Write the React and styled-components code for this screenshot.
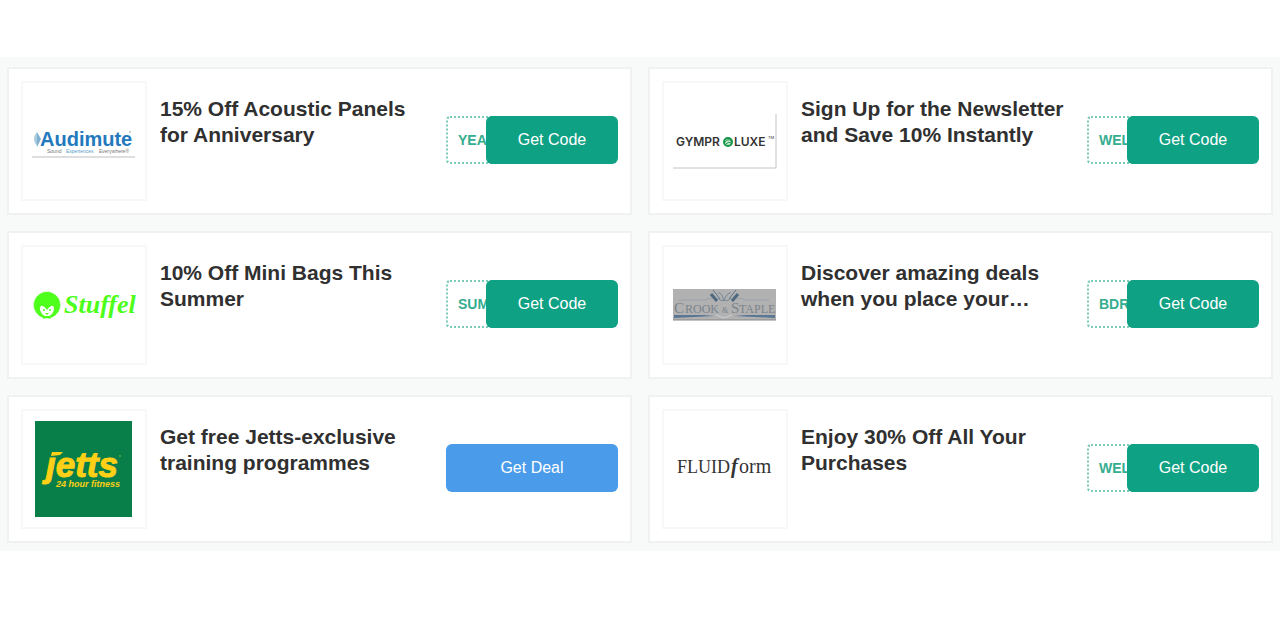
import React from 'react'

import styled, { createGlobalStyle } from 'styled-components'


const coupons = [
    {
        id: 'audimute',
        title: '15% Off Acoustic Panels for Anniversary',
        code: 'YEAR',
        logo: AudimuteLogo,
    },
    {
        id: 'gymproluxe',
        title: 'Sign Up for the Newsletter and Save 10% Instantly',
        code: 'WELC',
        logo: GymproluxeLogo,
    },
    {
        id: 'stuffel',
        title: '10% Off Mini Bags This Summer',
        code: 'SUMM',
        logo: StuffelLogo,
    },
    {
        id: 'crook',
        title: 'Discover amazing deals when you place your…',
        code: 'BDRC',
        logo: CrookLogo,
    },
    {
        id: 'jetts',
        title: 'Get free Jetts-exclusive training programmes',
        logo: JettsLogo,
    },
    {
        id: 'fluidform',
        title: 'Enjoy 30% Off All Your Purchases',
        code: 'WELC',
        logo: FluidformLogo,
    },
]

function App() {
    return (
        <>
            <GlobalStyle />
            <CouponGrid>
                {coupons.map((coupon) => (
                    <Coupon key={coupon.id} {...coupon} />
                ))}
            </CouponGrid>
        </>
    )
}

function Coupon({ title, code, logo: Logo }) {
    return (
        <Card>
            <LogoBox>
                <Logo />
            </LogoBox>
            <Title>{title}</Title>
            {code ? (
                <CodeButton type="button">
                    <Code>{code}</Code>
                    <CodeLabel>Get Code</CodeLabel>
                </CodeButton>
            ) : (
                <DealButton type="button">Get Deal</DealButton>
            )}
        </Card>
    )
}

function AudimuteLogo() {
    return (
        <LogoSvg viewBox="0 0 104 98" role="img" aria-label="Audimute">
            <path d="M5 40 Q-1 47 5 54 Z" fill="#a9cbe0" />
            <path d="M5 40 L9 47 L5 55 Z" fill="#7fb0d0" />
            <SansText x="8" y="54" fontSize="20" fontWeight="700" fill="#2379bd">Audimute</SansText>
            <circle cx="98" cy="40" r="1" fill="#b5c4ce" />
            <SansText x="15" y="61" fontSize="5" fill="#777">Sound</SansText>
            <SansText x="34" y="61" fontSize="5" fill="#5a9cc5">Experiences</SansText>
            <SansText x="67" y="61" fontSize="5" fill="#777">Everywhere®</SansText>
            <path d="M0 65 H103" stroke="#bdbdbd" />
        </LogoSvg>
    )
}

function GymproluxeLogo() {
    return (
        <LogoSvg viewBox="0 0 104 98" role="img" aria-label="Gymproluxe">
            <InterText x="3" y="54" fontSize="12" fontWeight="600" fill="#333">GYMPR</InterText>
            <circle cx="55" cy="50" r="4" fill="#c5e8d0" stroke="#159447" strokeWidth="2" />
            <path d="M52 50 Q55 46 58 49 M53 52 Q56 49 58 51" stroke="#159447" fill="none" />
            <InterText x="61" y="54" fontSize="12" fontWeight="600" fill="#333">LUXE</InterText>
            <InterText x="95" y="47" fontSize="4" fill="#333">TM</InterText>
            <path d="M103 22 V76 H0" stroke="#c4c4c4" strokeWidth="1" fill="none" />
        </LogoSvg>
    )
}

function StuffelLogo() {
    return (
        <LogoSvg viewBox="0 0 104 98" role="img" aria-label="Stuffel">
            <circle cx="15" cy="49" r="13" fill="#4dff1a" />
            <circle cx="15" cy="49" r="13" fill="none" stroke="#4dff1a" strokeDasharray="1 1" strokeWidth="1" />
            <path d="M8 53 Q8 49 11 50 Q13 51 15 54 Q17 51 19 50 Q22 49 22 53 Q22 58 15 61 Q8 58 8 53 Z" fill="#fff" />
            <circle cx="12" cy="54" r="1" fill="#4dff1a" />
            <circle cx="18" cy="54" r="1" fill="#4dff1a" />
            <path d="M13 57 H17 L15 59 Z M10 60 H20 L18 63 L15 61 L12 63 Z" fill="#4dff1a" />
            <ScriptText x="32" y="57" fontSize="26" fill="#4dff1a">Stuffel</ScriptText>
        </LogoSvg>
    )
}

function CrookLogo() {
    return (
        <LogoSvg viewBox="0 0 104 98" role="img" aria-label="Crook and Staple">
            <rect x="0" y="33" width="103" height="31" fill="#b1b1b1" />
            <path d="M40 34 L47 43 M63 34 L56 43" stroke="#60758a" strokeWidth="1" />
            <path d="M38 38 L44 45 M65 38 L59 45" stroke="#4e6880" strokeWidth="3" />
            <path d="M45 37 Q49 36 51 45 Q54 36 58 37 M45 42 Q50 47 51 43 Q53 47 58 42" stroke="#788896" fill="none" />
            <path d="M6 44 H32 Q37 41 40 43 M96 44 H72 Q67 41 63 43" stroke="#9aa1a8" fill="none" />
            <SerifText y="57" fill="#7a838c">
                <tspan x="1" fontSize="15">C</tspan>
                <tspan x="12" fontSize="12">ROOK</tspan>
                <tspan x="49" fontSize="8">&amp;</tspan>
                <tspan x="58" fontSize="15">S</tspan>
                <tspan x="66" fontSize="12">TAPLE</tspan>
            </SerifText>
            <path d="M1 59 L30 59 L42 60 L1 62 Z M102 59 L73 59 L61 60 L102 62 Z" fill="#5a7793" />
            <path d="M43 59 L51 62 L59 59" stroke="#cdd0d3" fill="none" />
            <path d="M0 64 H103" stroke="#858585" />
        </LogoSvg>
    )
}

function JettsLogo() {
    return (
        <LogoSvg viewBox="0 0 104 98" role="img" aria-label="Jetts 24 hour fitness">
            <rect x="3" y="1" width="97" height="96" fill="#087f49" />
            <SansText x="14" y="57" fontSize="35" fontWeight="700" fontStyle="italic" fill="#ffd016" stroke="#ffd016">ȷetts</SansText>
            <path d="M20 32 L31 32 L28 35 L19 36 Z" fill="#ffd016" />
            <circle cx="88" cy="36" r="1" fill="#5aa03a" />
            <SansText x="24" y="67" fontSize="9" fontWeight="700" fontStyle="italic" fill="#ffd016">24 hour fitness</SansText>
        </LogoSvg>
    )
}

function FluidformLogo() {
    return (
        <LogoSvg viewBox="0 0 104 98" role="img" aria-label="Fluidform">
            <SerifText y="53" fontSize="18" fill="#333">
                <tspan x="4">FLUID</tspan>
                <tspan x="58" fontSize="20" fontWeight="700" fontStyle="italic">f</tspan>
                <tspan x="66" fontSize="20">orm</tspan>
            </SerifText>
        </LogoSvg>
    )
}

const GlobalStyle = createGlobalStyle`
    * {
        box-sizing: border-box;
    }
    body {
        margin: 0;
        background-color: #ffffff;
        font-family: "Liberation Sans", Arial, sans-serif;
    }
`

const CouponGrid = styled.main`
    display: grid;
    grid-template-columns: repeat(2, minmax(0, 1fr));
    gap: 16px;
    margin-top: 57px;
    padding: 10px 7px 8px;
    background-color: #f8faf9;
`

const Card = styled.article`
    display: flex;
    align-items: center;
    gap: 13px;
    padding: 12px;
    border: 2px solid #f0f2f2;
    background-color: #ffffff;
`

const LogoBox = styled.div`
    display: flex;
    flex-shrink: 0;
    align-items: center;
    justify-content: center;
    width: 126px;
    height: 120px;
    border: 2px solid #f8f8f8;
`

const LogoSvg = styled.svg`
    width: 104px;
    height: 98px;
`

const SansText = styled.text`
    font-family: "Liberation Sans", Arial, sans-serif;
`

const InterText = styled.text`
    font-family: Inter, sans-serif;
`

const SerifText = styled.text`
    font-family: "Liberation Serif", "Times New Roman", serif;
`

const ScriptText = styled(SerifText)`
    font-style: italic;
    font-weight: 700;
`

const Title = styled.h3`
    flex: 1;
    align-self: flex-start;
    min-width: 0;
    margin: 15px 0 0;
    color: #303030;
    font-size: 21px;
    font-weight: 700;
    line-height: 26px;
`

const Button = styled.button`
    flex-shrink: 0;
    width: 172px;
    height: 48px;
    margin: 0 0 2px;
    padding: 0;
    border: none;
    border-radius: 6px;
    font-family: inherit;
    font-size: 16px;
    cursor: pointer;
`

const DealButton = styled(Button)`
    background-color: #4a9bea;
    color: #ffffff;
`

const CodeButton = styled(Button)`
    display: flex;
    background-color: transparent;
`

const Code = styled.span`
    display: flex;
    align-items: center;
    width: 46px;
    height: 48px;
    padding-left: 10px;
    overflow: hidden;
    border: 2px dotted #7accb8;
    border-right: none;
    border-radius: 4px 0 0 4px;
    color: #35ad8f;
    font-size: 14px;
    font-weight: 700;
`

const CodeLabel = styled.span`
    display: flex;
    flex: 1;
    align-items: center;
    justify-content: center;
    height: 48px;
    margin-left: -6px;
    border-radius: 6px;
    background-color: #0fa184;
    color: #ffffff;
    z-index: 1;
`

export default App
